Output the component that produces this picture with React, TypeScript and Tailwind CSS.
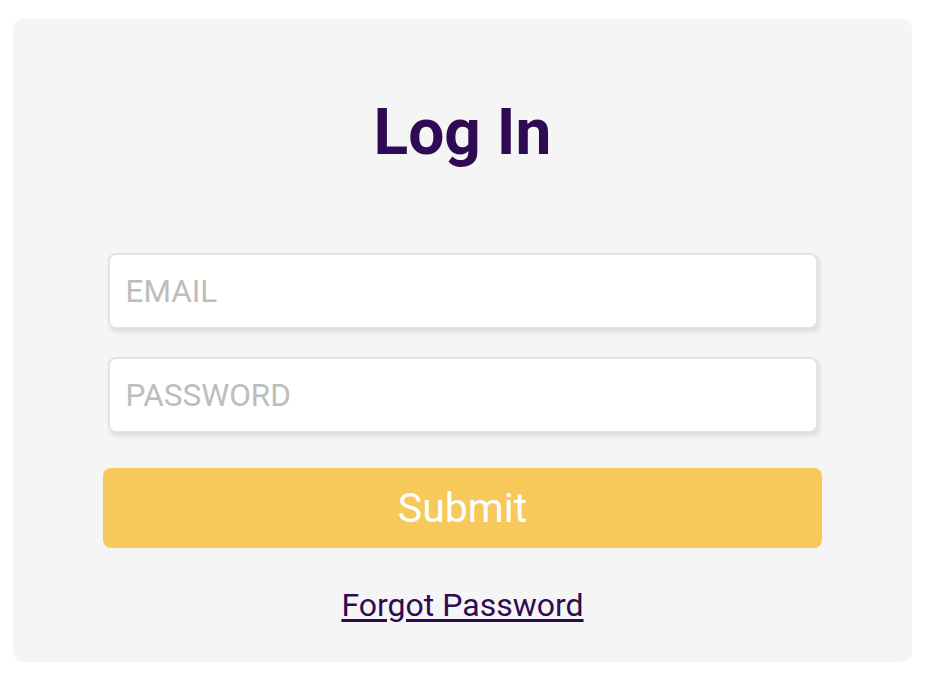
export default function App() {
  return (
    <div className="min-h-screen bg-white pt-[19px] pl-[13px]">
      <div className="w-[899px] h-[643px] rounded-[10px] bg-[#f5f5f5] flex flex-col items-center font-['Roboto',sans-serif]">
        <h1 className="mt-[82px] text-[64px] leading-[64px] font-bold text-[#2e0b52]">Log In</h1>

        <form className="flex flex-col items-center mt-[88px]" onSubmit={(e) => e.preventDefault()}>
          <input
            type="email"
            placeholder="EMAIL"
            className="w-[710px] h-[76px] rounded-lg border-2 border-[#e3e3e3] bg-white pl-4 text-[31.5px] text-[#333] placeholder:text-[#bdbdbd] shadow-[2px_3px_4px_rgba(0,0,0,0.1)] outline-none"
          />
          <input
            type="password"
            placeholder="PASSWORD"
            className="mt-[28px] w-[710px] h-[76px] rounded-lg border-2 border-[#e3e3e3] bg-white pl-4 text-[31.5px] text-[#333] placeholder:text-[#bdbdbd] shadow-[2px_3px_4px_rgba(0,0,0,0.1)] outline-none"
          />
          <button
            type="submit"
            className="mt-[35px] w-[719px] h-[80px] rounded-lg bg-[#f7c95b] text-white text-[41px] leading-none"
          >
            Submit
          </button>
        </form>

        <a href="#" className="mt-[37px] text-[32px] leading-[40px] text-[#2e0b52] underline underline-offset-[3px]">
          Forgot Password
        </a>
      </div>
    </div>
  )
}
